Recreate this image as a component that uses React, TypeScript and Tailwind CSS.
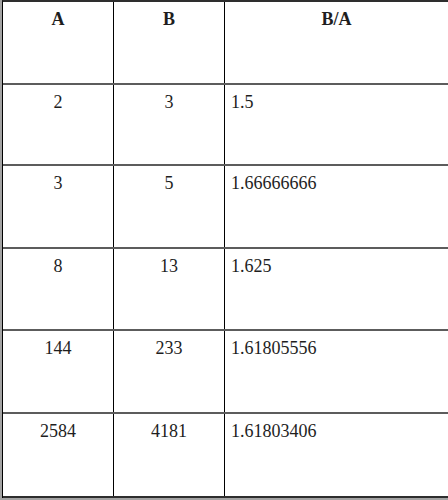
const rows = [
  { a: '2', b: '3', r: '1.5', h: 'h-[81px]' },
  { a: '3', b: '5', r: '1.66666666', h: 'h-[83px]' },
  { a: '8', b: '13', r: '1.625', h: 'h-[82px]' },
  { a: '144', b: '233', r: '1.61805556', h: 'h-[83px]' },
  { a: '2584', b: '4181', r: '1.61803406', h: 'h-[84px]' },
];

export default function App() {
  return (
    <div className="w-[448px] h-[500px] bg-[#a3a3a3] pl-[2px] overflow-hidden font-['Liberation_Serif',serif] text-[18px] leading-[20px] text-[#1e1e1e]">
      <div className="w-[446px] bg-white border-l border-black border-t-2 border-t-[#2e2e2e]">
        {/* header */}
        <div className="flex h-[83px] border-b-2 border-[#5c5c5c] font-bold">
          <div className="w-[111px] shrink-0 border-r border-black pt-[7px] text-center">A</div>
          <div className="w-[111px] shrink-0 border-r border-black pt-[7px] text-center">B</div>
          <div className="flex-1 pt-[7px] text-center">B/A</div>
        </div>
        {rows.map((row, i) => (
          <div
            key={i}
            className={`flex ${row.h} border-b-2 ${i === rows.length - 1 ? 'border-[#2e2e2e]' : 'border-[#5c5c5c]'}`}
          >
            <div className="w-[111px] shrink-0 border-r border-black pt-[7px] text-center">{row.a}</div>
            <div className="w-[111px] shrink-0 border-r border-black pt-[7px] text-center">{row.b}</div>
            <div className="flex-1 pt-[7px] pl-[6px]">{row.r}</div>
          </div>
        ))}
      </div>
    </div>
  );
}
